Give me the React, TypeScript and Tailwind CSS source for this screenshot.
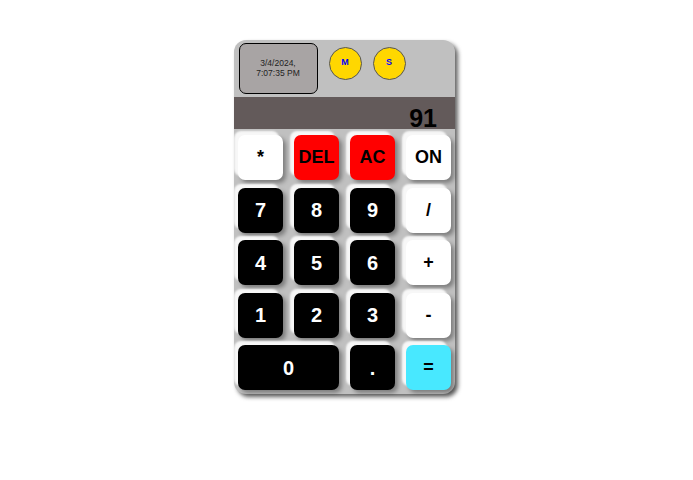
import React from "react";

type Btn = { label: string; kind: "w" | "b" | "r" | "c"; span?: boolean; digit?: boolean };

const rows: Btn[] = [
  { label: "*", kind: "w" },
  { label: "DEL", kind: "r" },
  { label: "AC", kind: "r" },
  { label: "ON", kind: "w" },
  { label: "7", kind: "b", digit: true },
  { label: "8", kind: "b", digit: true },
  { label: "9", kind: "b", digit: true },
  { label: "/", kind: "w" },
  { label: "4", kind: "b", digit: true },
  { label: "5", kind: "b", digit: true },
  { label: "6", kind: "b", digit: true },
  { label: "+", kind: "w" },
  { label: "1", kind: "b", digit: true },
  { label: "2", kind: "b", digit: true },
  { label: "3", kind: "b", digit: true },
  { label: "-", kind: "w" },
  { label: "0", kind: "b", span: true, digit: true },
  { label: ".", kind: "b", digit: true },
  { label: "=", kind: "c" },
];

const kindClass: Record<Btn["kind"], string> = {
  w: "bg-white text-black",
  b: "bg-black text-white",
  r: "bg-[#ff0000] text-black",
  c: "bg-[#48e8ff] text-black",
};

export default function App() {
  return (
    <div className="flex items-start justify-center pt-[40px] pr-[4px] bg-white min-h-[480px]" style={{ fontFamily: '"Liberation Sans", Arial, sans-serif' }}>
      <div className="w-[221px] bg-[#c0c0c0] rounded-[12px] shadow-[3px_3px_4px_#666] pb-[4px]">
        <div className="flex items-start gap-[11px] pl-[4.5px] pt-[3px]">
          <div className="w-[79px] h-[51px] bg-[#a8a4a4] border border-black rounded-[7px] flex flex-col items-center justify-center text-[8.5px] leading-[9.3px] text-[#222]">
            <span>3/4/2024,</span>
            <span>7:07:35 PM</span>
          </div>
          <div className="mt-[3.5px] w-[33px] h-[33px] rounded-full bg-[#ffd700] border border-[#555] flex items-center justify-center text-[9px] font-bold text-[#0000ff]">
            M
          </div>
          <div className="mt-[3.5px] w-[33px] h-[33px] rounded-full bg-[#ffd700] border border-[#555] flex items-center justify-center text-[9px] font-bold text-[#0000ff]">
            S
          </div>
        </div>
        <div className="mt-[3px] h-[32px] bg-[#635a5a] flex justify-end pr-[18px]">
          <div className="pt-[9px] text-[25px] leading-none font-bold text-black h-[32px]">91</div>
        </div>
        <div className="mt-[6px] px-[4px] grid grid-cols-[45px_45px_45px_45px] gap-x-[11px] gap-y-[7.5px]">
          {rows.map((b, i) => (
            <div
              key={i}
              className={`${b.span ? "col-span-2" : ""} h-[45px] rounded-[7px] flex items-center justify-center font-bold ${b.digit ? "text-[20px]" : "text-[18px]"} shadow-[-4px_-4px_2px_#f7f7f7,3px_3px_4px_rgba(0,0,0,0.35)] ${kindClass[b.kind]}`}
            >
              {b.label}
            </div>
          ))}
        </div>
      </div>
    </div>
  );
}
